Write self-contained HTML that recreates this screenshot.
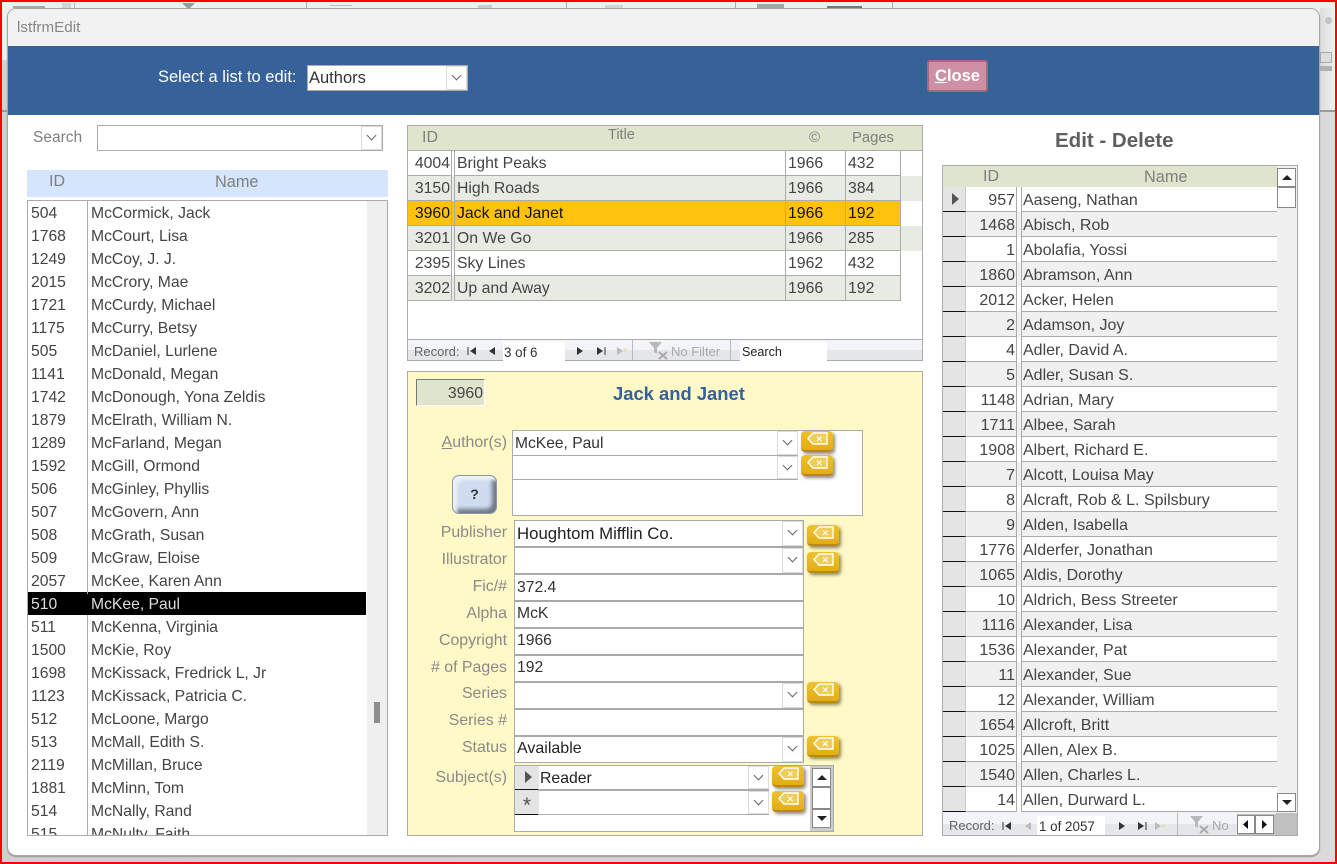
<!DOCTYPE html>
<html><head><meta charset="utf-8"><title>lstfrmEdit</title>
<style>
html,body{margin:0;padding:0}
body{width:1337px;height:864px;overflow:hidden;position:relative;background:#d2d2d2;font-family:"Liberation Sans",sans-serif;font-size:15px;color:#444}
div,span,svg,i,b{box-sizing:border-box}
.a{position:absolute}
.t{position:absolute;white-space:nowrap}
.lab{position:absolute;right:830px;color:#8a8a8a;white-space:nowrap;line-height:22px;font-size:15.9px}
.box{position:absolute;background:#fff;border:1px solid #ababab}
.in{position:absolute;background:#fff;border:1px solid #a9a9a9;padding-left:2px;line-height:25px;color:#333;white-space:nowrap;font-size:15.7px}
.cb{position:absolute;right:0;top:0;bottom:0;width:21px;background:#fff;border:1px solid #dcdcdc}
.cb:after{content:"";position:absolute;left:6px;top:5px;width:6px;height:6px;border-right:1px solid #666;border-bottom:1px solid #666;transform:rotate(45deg)}
.btn{position:absolute;width:32px;height:21px;border-radius:4px;background:linear-gradient(#eec22f,#e3ad17);border-bottom:2px solid #b98a10;box-shadow:2px 2px 3px rgba(70,60,30,.6)}
.btn svg{position:absolute;left:6px;top:1px}
.l{position:absolute;left:28px;top:201px;width:338px;height:634px;overflow:hidden}
.l div{height:23px;line-height:25px;white-space:nowrap;position:relative;padding-left:63px;color:#444;font-size:15.7px}
.l b{position:absolute;left:3px;font-weight:normal}
.m div.row{position:absolute;left:408px;width:514px;height:25px;line-height:26px;font-size:15.8px}
.m .c{position:absolute;top:0;height:25px;border-right:1px solid #ababab;border-bottom:1px solid #ababab;padding-left:2px;white-space:nowrap}
.gr{background:#e8ebe4}
.wh{background:#fff}
.r{position:absolute;left:943px;top:187px;width:334px;height:626px;overflow:hidden}
.r div{height:25px;line-height:27px;position:relative;white-space:nowrap;font-size:16px;background:#fff}
.r div:nth-child(even){background:#f0f0f0}
.r i{position:absolute;left:0;top:0;width:23px;height:25px;background:#e4e4e4;border-bottom:1px solid #111;border-right:1px solid #ccc}
.r b{position:absolute;left:23px;width:51px;top:0;height:25px;font-weight:normal;text-align:right;padding-right:1px;border-bottom:1px solid #ababab;border-right:1px solid #ababab}
.r span{position:absolute;left:78px;top:0;width:256px;height:25px;padding-left:1px;border-left:1px solid #ababab;border-bottom:1px solid #ababab}
.nav{position:absolute;background:linear-gradient(#f3f4f7 0,#f3f4f7 50%,#e4e6ea 50%,#e4e6ea 100%);color:#666;font-size:13px;line-height:23px;white-space:nowrap}
.sb{position:absolute;width:19px;background:#fff;border:1px solid #888}
</style></head>
<body>
<svg width="0" height="0" style="position:absolute"><defs>
<symbol id="bk" viewBox="0 0 22 14"><path d="M1 6.5 L6 1 H20 V12 H6 Z" fill="#f0cd58" stroke="#fff" stroke-width="1.4"/><path d="M10 4.5 L14.5 9 M14.5 4.5 L10 9" stroke="#fff" stroke-width="1.2" fill="none"/></symbol>
<symbol id="nf" viewBox="0 0 10 10"><path d="M1 1V9" stroke="currentColor" fill="none"/><path d="M9 1V9L3 5Z" fill="currentColor"/></symbol>
<symbol id="np" viewBox="0 0 10 10"><path d="M7 1V9L1 5Z" fill="currentColor"/></symbol>
<symbol id="nn" viewBox="0 0 10 10"><path d="M1 1V9L7 5Z" fill="currentColor"/></symbol>
<symbol id="nl" viewBox="0 0 10 10"><path d="M1 1V9L7 5Z" fill="currentColor"/><path d="M9 1V9" stroke="currentColor" fill="none"/></symbol>
</defs></svg>

<!-- ribbon remnants -->
<div class="a" style="left:0;top:0;width:1337px;height:60px;background:#efefef"></div>
<div class="a" style="left:1320px;top:8px;width:15px;height:102px;background:linear-gradient(90deg,#dcdcdc,#f0f0f0)"></div>
<div class="a" style="left:0;top:110px;width:1337px;height:2px;background:#9a9a9a"></div>
<div class="a" style="left:0;top:112px;width:1337px;height:752px;background:linear-gradient(90deg,#cfcfcf,#dadada)"></div>
<div class="a" style="left:13px;top:6px;width:32px;height:2px;background:#a8a8a8"></div>
<div class="a" style="left:62px;top:3px;width:9px;height:5px;background:#d4d4d4"></div>
<div class="a" style="left:74px;top:3px;width:1px;height:5px;background:#b5b5b5"></div>
<svg class="a" style="left:182px;top:3px" width="13" height="5"><path d="M0 0H13L8 5H5Z" fill="#9a9a9a"/></svg>
<div class="a" style="left:306px;top:2px;width:1px;height:6px;background:#aaa"></div>
<div class="a" style="left:330px;top:5px;width:22px;height:1px;background:#bbb"></div>
<div class="a" style="left:478px;top:5px;width:14px;height:3px;background:#ccc"></div>
<div class="a" style="left:566px;top:2px;width:1px;height:6px;background:#aaa"></div>
<div class="a" style="left:605px;top:5px;width:18px;height:3px;background:#d4d4d4"></div>
<div class="a" style="left:735px;top:2px;width:1px;height:6px;background:#aaa"></div>
<div class="a" style="left:757px;top:4px;width:27px;height:4px;background:#a5a5a5"></div>
<div class="a" style="left:827px;top:6px;width:35px;height:2px;background:#777"></div>
<div class="a" style="left:892px;top:2px;width:1px;height:6px;background:#aaa"></div>
<div class="a" style="left:1325px;top:17px;width:7px;height:7px;background:#c4c4c4;border-radius:4px"></div>
<div class="a" style="left:1320px;top:52px;width:12px;height:11px;border:1px solid #aaa;background:#ddd"></div>
<div class="a" style="left:1320px;top:66px;width:12px;height:5px;background:#b0b0b0"></div>

<!-- red frame -->
<div class="a" style="left:0;top:0;width:1337px;height:2px;background:#f00;z-index:9"></div>
<div class="a" style="left:0;top:862px;width:1337px;height:2px;background:#f00;z-index:9"></div>
<div class="a" style="left:0;top:0;width:2px;height:864px;background:#f00;z-index:9"></div>
<div class="a" style="left:1335px;top:0;width:2px;height:864px;background:#f00;z-index:9"></div>

<!-- window -->
<div class="a" style="left:7px;top:8px;width:1313px;height:848px;background:#fff;border:1px solid #a6a6a6;border-radius:9px;overflow:hidden;box-shadow:0 1px 1px #999"></div>
<div class="a" style="left:8px;top:9px;width:1311px;height:37px;background:#f2f2f2;border-radius:8px 8px 0 0"></div>
<div class="t" style="left:17px;top:19px;font-size:15.2px;color:#868686;line-height:18px">lstfrmEdit</div>
<div class="a" style="left:8px;top:46px;width:1311px;height:69px;background:#366299"></div>
<div class="t" style="left:158px;top:67px;color:#fff;font-size:16.5px;line-height:20px">Select a list to edit:</div>
<div class="box" style="left:307px;top:65px;width:161px;height:26px;line-height:25px;padding-left:1px;color:#333;font-size:16.5px">Authors<div class="cb"></div></div>
<div class="a" style="left:927px;top:60px;width:61px;height:32px;background:#cf90a6;border:2px solid #a8667f;border-radius:3px;color:#fff;font-weight:bold;font-size:16.5px;line-height:28px;text-align:center"><u>C</u>lose</div>

<!-- left -->
<div class="t" style="left:33px;top:128px;color:#7f7f7f;line-height:20px;font-size:15.5px">Search</div>
<div class="box" style="left:97px;top:125px;width:286px;height:26px"><div class="cb"></div></div>
<div class="a" style="left:27px;top:170px;width:361px;height:27px;background:#d5e5fb"></div>
<div class="t" style="left:49px;top:172px;color:#7f7f7f;line-height:20px;font-size:16px">ID</div>
<div class="t" style="left:215px;top:172px;color:#7f7f7f;line-height:20px;font-size:16.3px">Name</div>
<div class="box" style="left:27px;top:200px;width:361px;height:636px"></div>
<div class="a" style="left:367px;top:201px;width:20px;height:634px;background:#efefef"></div>
<div class="a" style="left:374px;top:702px;width:6px;height:21px;background:#8c8c8c"></div>
<div class="l">
<div><b>504</b>McCormick, Jack</div>
<div><b>1768</b>McCourt, Lisa</div>
<div><b>1249</b>McCoy, J. J.</div>
<div><b>2015</b>McCrory, Mae</div>
<div><b>1721</b>McCurdy, Michael</div>
<div><b>1175</b>McCurry, Betsy</div>
<div><b>505</b>McDaniel, Lurlene</div>
<div><b>1141</b>McDonald, Megan</div>
<div><b>1742</b>McDonough, Yona Zeldis</div>
<div><b>1879</b>McElrath, William N.</div>
<div><b>1289</b>McFarland, Megan</div>
<div><b>1592</b>McGill, Ormond</div>
<div><b>506</b>McGinley, Phyllis</div>
<div><b>507</b>McGovern, Ann</div>
<div><b>508</b>McGrath, Susan</div>
<div><b>509</b>McGraw, Eloise</div>
<div><b>2057</b>McKee, Karen Ann</div>
<div style="background:#000;color:#ddd"><b>510</b>McKee, Paul</div>
<div><b>511</b>McKenna, Virginia</div>
<div><b>1500</b>McKie, Roy</div>
<div><b>1698</b>McKissack, Fredrick L, Jr</div>
<div><b>1123</b>McKissack, Patricia C.</div>
<div><b>512</b>McLoone, Margo</div>
<div><b>513</b>McMall, Edith S.</div>
<div><b>2119</b>McMillan, Bruce</div>
<div><b>1881</b>McMinn, Tom</div>
<div><b>514</b>McNally, Rand</div>
<div><b>515</b>McNulty, Faith</div>
</div>
<div class="a" style="left:87px;top:201px;width:1px;height:393px;background:#ababab"></div>
<div class="a" style="left:87px;top:615px;width:1px;height:220px;background:#ababab"></div>

<!-- middle grid -->
<div class="box" style="left:407px;top:125px;width:516px;height:236px"></div>
<div class="a" style="left:408px;top:126px;width:514px;height:25px;background:#dfe4cc;border-bottom:1px solid #ababab"></div>
<div class="t" style="left:422px;top:128px;color:#7f7f7f;line-height:20px;font-size:16px">ID</div>
<div class="t" style="left:608px;top:126px;color:#7f7f7f;line-height:18px;font-size:14.5px">Title</div>
<div class="t" style="left:809px;top:128px;color:#7f7f7f;line-height:20px">©</div>
<div class="t" style="left:852px;top:128px;color:#7f7f7f;line-height:20px;font-size:14.8px">Pages</div>
<div class="m">
<div class="row wh" style="top:151px"><div class="c" style="left:0;width:44px;text-align:right;padding-right:1px">4004</div><div class="c" style="left:46px;width:332px;border-left:1px solid #ababab">Bright Peaks</div><div class="c" style="left:378px;width:60px">1966</div><div class="c" style="left:438px;width:55px">432</div></div>
<div class="row gr" style="top:176px"><div class="c" style="left:0;width:44px;text-align:right;padding-right:1px">3150</div><div class="c" style="left:46px;width:332px;border-left:1px solid #ababab">High Roads</div><div class="c" style="left:378px;width:60px">1966</div><div class="c" style="left:438px;width:55px">384</div></div>
<div class="row wh" style="top:201px;color:#111"><div class="c" style="left:0;width:493px;background:#ffc20e"></div><div class="c" style="left:0;width:44px;text-align:right;padding-right:1px">3960</div><div class="c" style="left:46px;width:332px;border-left:1px solid #ababab">Jack and Janet</div><div class="c" style="left:378px;width:60px">1966</div><div class="c" style="left:438px;width:55px">192</div></div>
<div class="row gr" style="top:226px"><div class="c" style="left:0;width:44px;text-align:right;padding-right:1px">3201</div><div class="c" style="left:46px;width:332px;border-left:1px solid #ababab">On We Go</div><div class="c" style="left:378px;width:60px">1966</div><div class="c" style="left:438px;width:55px">285</div></div>
<div class="row wh" style="top:251px"><div class="c" style="left:0;width:44px;text-align:right;padding-right:1px">2395</div><div class="c" style="left:46px;width:332px;border-left:1px solid #ababab">Sky Lines</div><div class="c" style="left:378px;width:60px">1962</div><div class="c" style="left:438px;width:55px">432</div></div>
<div class="row gr" style="top:276px;width:493px"><div class="c" style="left:0;width:44px;text-align:right;padding-right:1px">3202</div><div class="c" style="left:46px;width:332px;border-left:1px solid #ababab">Up and Away</div><div class="c" style="left:378px;width:60px">1966</div><div class="c" style="left:438px;width:55px">192</div></div>
</div>
<div class="nav" style="left:408px;top:339px;width:514px;height:21px;border-top:1px solid #ababab">
<span class="t" style="left:6px;top:0">Record:</span>
<svg class="a" style="left:59px;top:6px;color:#333" width="10" height="10"><use href="#nf"/></svg>
<svg class="a" style="left:80px;top:6px;color:#333" width="10" height="10"><use href="#np"/></svg>
<span class="a" style="left:95px;top:2px;width:62px;height:19px;background:#fff;color:#333;line-height:21px;padding-left:1px;font-size:13.4px">3 of 6</span>
<svg class="a" style="left:168px;top:6px;color:#333" width="10" height="10"><use href="#nn"/></svg>
<svg class="a" style="left:188px;top:6px;color:#333" width="10" height="10"><use href="#nl"/></svg>
<svg class="a" style="left:208px;top:6px;color:#bbb" width="10" height="10"><use href="#nn"/></svg>
<span class="t" style="left:215px;top:1px;color:#e8d9a0;font-size:12px">*</span>
<span class="a" style="left:224px;top:0;width:1px;height:20px;background:#bbb"></span>
<svg class="a" style="left:240px;top:1px" width="22" height="19"><path d="M1 1H14L9 7V13L6 11V7Z" fill="#b8b8b8"/><path d="M11 11L19 18M19 11L11 18" stroke="#aaa" stroke-width="2"/></svg>
<span class="t" style="left:263px;top:0;color:#aaa">No Filter</span>
<span class="a" style="left:322px;top:0;width:1px;height:20px;background:#bbb"></span>
<span class="a" style="left:332px;top:2px;width:87px;height:19px;background:#fff;color:#222;line-height:21px;padding-left:2px;font-size:12.6px">Search</span>
</div>

<!-- detail form -->
<div class="a" style="left:407px;top:371px;width:516px;height:465px;background:#fef9c7;border:1px solid #ababab"></div>
<div class="a" style="left:416px;top:379px;width:69px;height:27px;background:#dfe4cc;border:1px solid;border-color:#777 #fff #fff #777;text-align:right;padding-right:1px;line-height:28px;font-size:15.8px">3960</div>
<div class="t" style="left:613px;top:383px;color:#366299;font-weight:bold;font-size:18.4px;line-height:21px">Jack and Janet</div>

<div class="lab" style="top:432px"><u>A</u>uthor(s)</div>
<div class="box" style="left:512px;top:430px;width:351px;height:86px"></div>
<div class="a" style="left:513px;top:431px;width:285px;height:25px;border-bottom:1px solid #ababab;line-height:25px;padding-left:2px;font-size:15.6px;color:#333">McKee, Paul<div class="cb" style="bottom:0"></div></div>
<div class="a" style="left:513px;top:456px;width:285px;height:24px;border-bottom:1px solid #ababab"><div class="cb"></div></div>
<div class="btn" style="left:801px;top:431px"><svg width="22" height="14"><use href="#bk"/></svg></div>
<div class="btn" style="left:801px;top:455px"><svg width="22" height="14"><use href="#bk"/></svg></div>
<div class="a" style="left:452px;top:475px;width:45px;height:39px;border-radius:7px;background:#cfdcef;border:1px solid #8d97a6;box-shadow:inset 4px 4px 3px #eef2f8,inset -4px -4px 4px #6f7785;color:#333;font-weight:bold;font-size:14px;line-height:36px;text-align:center">?</div>

<div class="lab" style="top:522px">Publisher</div>
<div class="in" style="left:514px;top:520px;width:290px;height:27px;font-size:16.8px;color:#222">Houghtom Mifflin Co.<div class="cb"></div></div>
<div class="btn" style="left:807px;top:525px"><svg width="22" height="14"><use href="#bk"/></svg></div>
<div class="lab" style="top:549px">Illustrator</div>
<div class="in" style="left:514px;top:547px;width:290px;height:27px"><div class="cb"></div></div>
<div class="btn" style="left:807px;top:552px"><svg width="22" height="14"><use href="#bk"/></svg></div>
<div class="lab" style="top:576px">Fic/#</div>
<div class="in" style="left:514px;top:574px;width:290px;height:27px">372.4</div>
<div class="lab" style="top:603px">Alpha</div>
<div class="in" style="left:514px;top:601px;width:290px;height:27px;line-height:24px">McK</div>
<div class="lab" style="top:630px">Copyright</div>
<div class="in" style="left:514px;top:628px;width:290px;height:27px;line-height:24px">1966</div>
<div class="lab" style="top:657px"># of Pages</div>
<div class="in" style="left:514px;top:655px;width:290px;height:27px;line-height:24px">192</div>
<div class="lab" style="top:683px">Series</div>
<div class="in" style="left:514px;top:682px;width:290px;height:27px"><div class="cb"></div></div>
<div class="btn" style="left:807px;top:682px"><svg width="22" height="14"><use href="#bk"/></svg></div>
<div class="lab" style="top:710px">Series #</div>
<div class="in" style="left:514px;top:709px;width:290px;height:27px"></div>
<div class="lab" style="top:737px">Status</div>
<div class="in" style="left:514px;top:736px;width:290px;height:27px;line-height:23px;font-size:16px;color:#222">Available<div class="cb"></div></div>
<div class="btn" style="left:807px;top:736px"><svg width="22" height="14"><use href="#bk"/></svg></div>

<div class="lab" style="top:767px">Subject(s)</div>
<div class="box" style="left:514px;top:765px;width:320px;height:67px"></div>
<div class="a" style="left:515px;top:766px;width:24px;height:24px;background:#e4e4e4;border-bottom:1px solid #111"></div>
<svg class="a" style="left:524px;top:769px" width="10" height="16"><path d="M1 2L8 8L1 14Z" fill="#555"/></svg>
<div class="a" style="left:515px;top:790px;width:24px;height:25px;background:#e4e4e4;border-bottom:1px solid #111;text-align:center;line-height:31px;font-size:21px;color:#555">*</div>
<div class="a" style="left:538px;top:766px;width:231px;height:25px;border-bottom:2px solid #ababab;line-height:26px;padding-left:2px;font-size:15.8px;color:#222">Reader<div class="cb" style="bottom:0"></div></div>
<div class="a" style="left:538px;top:791px;width:231px;height:24px;border-bottom:1px solid #ababab"><div class="cb"></div></div>
<div class="btn" style="left:772px;top:766px"><svg width="22" height="14"><use href="#bk"/></svg></div>
<div class="btn" style="left:772px;top:791px"><svg width="22" height="14"><use href="#bk"/></svg></div>
<div class="a" style="left:810px;top:766px;width:23px;height:65px;background:#ccc"></div>
<div class="sb" style="left:812px;top:768px;height:19px"></div>
<svg class="a" style="left:816px;top:774px" width="12" height="7"><path d="M1 6H11L6 1Z" fill="#222"/></svg>
<div class="sb" style="left:812px;top:787px;height:22px"></div>
<div class="sb" style="left:812px;top:809px;height:19px"></div>
<svg class="a" style="left:816px;top:815px" width="12" height="7"><path d="M1 1H11L6 6Z" fill="#222"/></svg>

<!-- right -->
<div class="t" style="left:1055px;top:128px;color:#5f5f5f;font-weight:bold;font-size:20.5px;line-height:25px">Edit - Delete</div>
<div class="box" style="left:942px;top:165px;width:356px;height:671px;background:#f0f0f0"></div>
<div class="a" style="left:943px;top:166px;width:334px;height:22px;background:#dfe4cc;border-bottom:1px solid #ababab"></div>
<div class="t" style="left:983px;top:167px;color:#7f7f7f;line-height:20px;font-size:16px">ID</div>
<div class="t" style="left:1144px;top:167px;color:#7f7f7f;line-height:20px;font-size:16.3px">Name</div>
<div class="r">
<div><i></i><b>957</b><span>Aaseng, Nathan</span></div>
<div><i></i><b>1468</b><span>Abisch, Rob</span></div>
<div><i></i><b>1</b><span>Abolafia, Yossi</span></div>
<div><i></i><b>1860</b><span>Abramson, Ann</span></div>
<div><i></i><b>2012</b><span>Acker, Helen</span></div>
<div><i></i><b>2</b><span>Adamson, Joy</span></div>
<div><i></i><b>4</b><span>Adler, David A.</span></div>
<div><i></i><b>5</b><span>Adler, Susan S.</span></div>
<div><i></i><b>1148</b><span>Adrian, Mary</span></div>
<div><i></i><b>1711</b><span>Albee, Sarah</span></div>
<div><i></i><b>1908</b><span>Albert, Richard E.</span></div>
<div><i></i><b>7</b><span>Alcott, Louisa May</span></div>
<div><i></i><b>8</b><span>Alcraft, Rob &amp; L. Spilsbury</span></div>
<div><i></i><b>9</b><span>Alden, Isabella</span></div>
<div><i></i><b>1776</b><span>Alderfer, Jonathan</span></div>
<div><i></i><b>1065</b><span>Aldis, Dorothy</span></div>
<div><i></i><b>10</b><span>Aldrich, Bess Streeter</span></div>
<div><i></i><b>1116</b><span>Alexander, Lisa</span></div>
<div><i></i><b>1536</b><span>Alexander, Pat</span></div>
<div><i></i><b>11</b><span>Alexander, Sue</span></div>
<div><i></i><b>12</b><span>Alexander, William</span></div>
<div><i></i><b>1654</b><span>Allcroft, Britt</span></div>
<div><i></i><b>1025</b><span>Allen, Alex B.</span></div>
<div><i></i><b>1540</b><span>Allen, Charles L.</span></div>
<div><i></i><b>14</b><span>Allen, Durward L.</span></div>
</div>
<svg class="a" style="left:951px;top:191px" width="10" height="16"><path d="M1 2L8 8L1 14Z" fill="#555"/></svg>
<div class="sb" style="left:1277px;top:168px;height:19px"></div>
<svg class="a" style="left:1281px;top:174px" width="12" height="7"><path d="M1 6H11L6 1Z" fill="#222"/></svg>
<div class="sb" style="left:1277px;top:187px;height:21px"></div>
<div class="sb" style="left:1277px;top:793px;height:19px"></div>
<svg class="a" style="left:1281px;top:799px" width="12" height="7"><path d="M1 1H11L6 6Z" fill="#222"/></svg>
<div class="a" style="left:1276px;top:813px;width:21px;height:22px;background:#c0c0c0"></div>
<div class="nav" style="left:943px;top:813px;width:333px;height:22px;line-height:26px">
<span class="t" style="left:6px;top:0">Record:</span>
<svg class="a" style="left:59px;top:8px;color:#333" width="10" height="10"><use href="#nf"/></svg>
<svg class="a" style="left:81px;top:8px;color:#bbb" width="10" height="10"><use href="#np"/></svg>
<span class="a" style="left:94px;top:3px;width:68px;height:19px;background:#fff;color:#333;line-height:22px;padding-left:2px;font-size:13.4px">1 of 2057</span>
<svg class="a" style="left:175px;top:8px;color:#333" width="10" height="10"><use href="#nn"/></svg>
<svg class="a" style="left:194px;top:8px;color:#333" width="10" height="10"><use href="#nl"/></svg>
<svg class="a" style="left:211px;top:8px;color:#bbb" width="10" height="10"><use href="#nn"/></svg>
<span class="t" style="left:218px;top:2px;color:#e8d9a0;font-size:12px">*</span>
<span class="a" style="left:234px;top:0;width:1px;height:22px;background:#bbb"></span>
<svg class="a" style="left:246px;top:2px" width="22" height="19"><path d="M1 1H14L9 7V13L6 11V7Z" fill="#b8b8b8"/><path d="M11 11L19 18M19 11L11 18" stroke="#aaa" stroke-width="2"/></svg>
<span class="t" style="left:269px;top:0;color:#aaa">No</span>
<span class="a" style="left:294px;top:1px;width:39px;height:21px;background:#c0c0c0"></span>
</div>
<div class="sb" style="left:1237px;top:815px;height:19px;width:18px"></div>
<svg class="a" style="left:1242px;top:819px" width="7" height="11"><path d="M6 1V10L1 5.5Z" fill="#111"/></svg>
<div class="sb" style="left:1255px;top:815px;height:19px;width:19px"></div>
<svg class="a" style="left:1261px;top:819px" width="7" height="11"><path d="M1 1V10L6 5.5Z" fill="#111"/></svg>
</body></html>
